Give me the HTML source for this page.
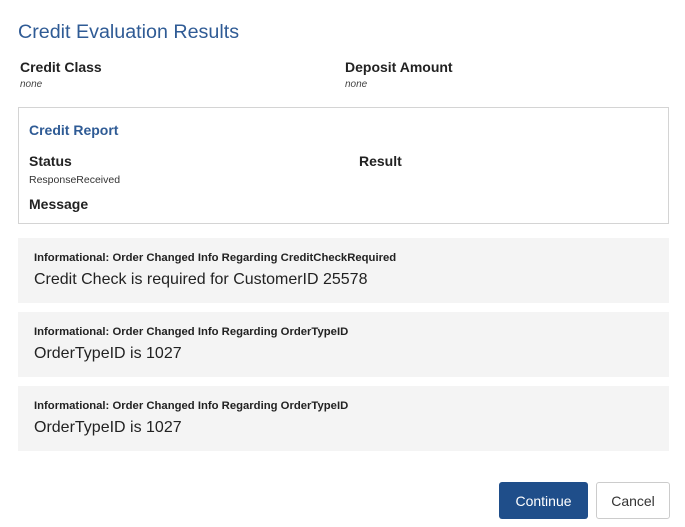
<!DOCTYPE html>
<html><head><style>
*{margin:0;padding:0;box-sizing:border-box}
body{width:685px;height:527px;background:#fff;font-family:"Liberation Sans",sans-serif;color:#222;position:relative;overflow:hidden}
.a{position:absolute;white-space:nowrap}
.h{font-size:19.7px;color:#2f5b95}
.b{font-weight:bold;font-size:14px;color:#222}
.n{font-style:italic;font-size:10px;color:#444}
.box{position:absolute;left:18px;width:651px;border:1px solid #d4d4d4}
.g{position:absolute;left:18px;width:651px;height:65px;background:#f4f4f4}
.g .s{position:absolute;left:16px;top:14px;font-size:11.3px;font-weight:bold;color:#222}
.g .l{position:absolute;left:16px;top:33px;font-size:16px;color:#222}
.btn{position:absolute;top:482px;height:37px;border-radius:3px;font-size:14px;display:flex;align-items:center;justify-content:center}
</style></head><body>
<div class="a h" style="left:18px;top:21px">Credit Evaluation Results</div>
<div class="a b" style="left:20px;top:59px">Credit Class</div>
<div class="a n" style="left:20px;top:79px">none</div>
<div class="a b" style="left:345px;top:59px">Deposit Amount</div>
<div class="a n" style="left:345px;top:79px">none</div>
<div class="box" style="top:107px;height:117px"></div>
<div class="a b" style="left:29px;top:122px;color:#2f5b95">Credit Report</div>
<div class="a b" style="left:29px;top:153px">Status</div>
<div class="a" style="left:29px;top:174px;font-size:10.5px;color:#333">ResponseReceived</div>
<div class="a b" style="left:359px;top:153px">Result</div>
<div class="a b" style="left:29px;top:196px">Message</div>
<div class="g" style="top:238px"><div class="s">Informational: Order Changed Info Regarding CreditCheckRequired</div><div class="l">Credit Check is required for CustomerID 25578</div></div>
<div class="g" style="top:312px"><div class="s">Informational: Order Changed Info Regarding OrderTypeID</div><div class="l">OrderTypeID is 1027</div></div>
<div class="g" style="top:386px"><div class="s">Informational: Order Changed Info Regarding OrderTypeID</div><div class="l">OrderTypeID is 1027</div></div>
<div class="btn" style="left:499px;width:89px;background:#1f4e8a;color:#fff">Continue</div>
<div class="btn" style="left:596px;width:74px;border:1px solid #ccc;color:#333">Cancel</div>
</body></html>
